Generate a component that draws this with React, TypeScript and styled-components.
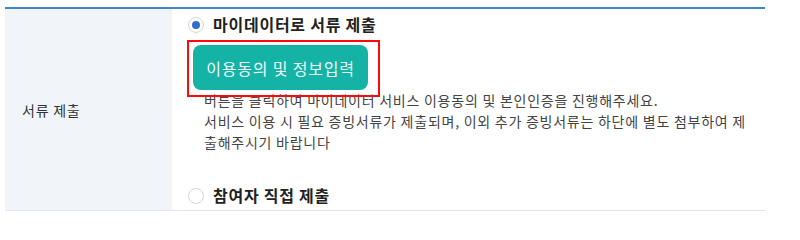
import * as React from 'react';
import styled, { createGlobalStyle } from 'styled-components';

const GlobalStyle = createGlobalStyle`
    body {
        margin: 0;
        background: #ffffff;
        font-family: "Noto Sans CJK KR", "Noto Sans", sans-serif;
    }
`;

const Page = styled.div`
    padding: 7px 35px 0 5px;
`;

const Table = styled.div`
    display: grid;
    grid-template-columns: 167px 1fr;
    border-top: 2px solid #3f84d2;
    border-bottom: 1px solid #e2e4e8;
`;

const LabelCell = styled.div`
    background-color: #f1f5f9;
    display: flex;
    align-items: center;
    padding-left: 17px;
    font-size: 14px;
    letter-spacing: 0.75px;
    color: #333333;
`;

const ContentCell = styled.div`
    padding: 5px 0 5px 16px;
`;

const RadioRow = styled.label<{ $gapTop?: number }>`
    display: flex;
    align-items: center;
    gap: 9px;
    height: 20px;
    margin-top: ${p => p.$gapTop ?? 0}px;
    font-size: 16px;
    letter-spacing: 0.75px;
    font-weight: 700;
    color: #222222;
`;

const RadioMark = styled.span<{ $checked: boolean }>`
    width: 16px;
    height: 16px;
    margin-top: 2px;
    box-sizing: border-box;
    border-radius: 50%;
    border: 1px solid #d4d6da;
    background: #ffffff;
    display: flex;
    align-items: center;
    justify-content: center;

    &::after {
        content: '';
        width: 8px;
        height: 8px;
        border-radius: 50%;
        background: ${p => (p.$checked ? '#2f6fcb' : 'transparent')};
    }
`;

const ButtonWrap = styled.div`
    position: relative;
    display: inline-block;
    margin: 11px 0 0 5px;
`;

const ConsentButton = styled.button`
    display: block;
    width: 175px;
    height: 45px;
    border: none;
    border-radius: 8px;
    background-color: #14b3a6;
    color: #eef8f6;
    font-family: inherit;
    font-size: 16px;
    letter-spacing: 0.8px;
    cursor: pointer;
`;

const Highlight = styled.span`
    position: absolute;
    left: -6px;
    top: -5px;
    width: 193px;
    height: 57px;
    box-sizing: border-box;
    border: 2.5px solid #ff0a0a;
    pointer-events: none;
`;

const Description = styled.p`
    margin: 0;
    padding-left: 16px;
    width: 545px;
    font-size: 14px;
    letter-spacing: 0.75px;
    line-height: 21px;
    color: #444444;
`;

const App: React.FunctionComponent = () => {
    return (
        <Page>
            <GlobalStyle />
            <Table>
                <LabelCell>서류 제출</LabelCell>
                <ContentCell>
                    <RadioRow>
                        <RadioMark $checked={true} />
                        마이데이터로 서류 제출
                    </RadioRow>
                    <ButtonWrap>
                        <ConsentButton>이용동의 및 정보입력</ConsentButton>
                        <Highlight />
                    </ButtonWrap>
                    <Description>
                        버튼을 클릭하여 마이데이터 서비스 이용동의 및 본인인증을 진행해주세요.
                        <br />
                        서비스 이용 시 필요 증빙서류가 제출되며, 이외 추가 증빙서류는 하단에 별도 첨부하여 제출해주시기 바랍니다
                    </Description>
                    <RadioRow $gapTop={32}>
                        <RadioMark $checked={false} />
                        참여자 직접 제출
                    </RadioRow>
                </ContentCell>
            </Table>
        </Page>
    );
}

export default App;
